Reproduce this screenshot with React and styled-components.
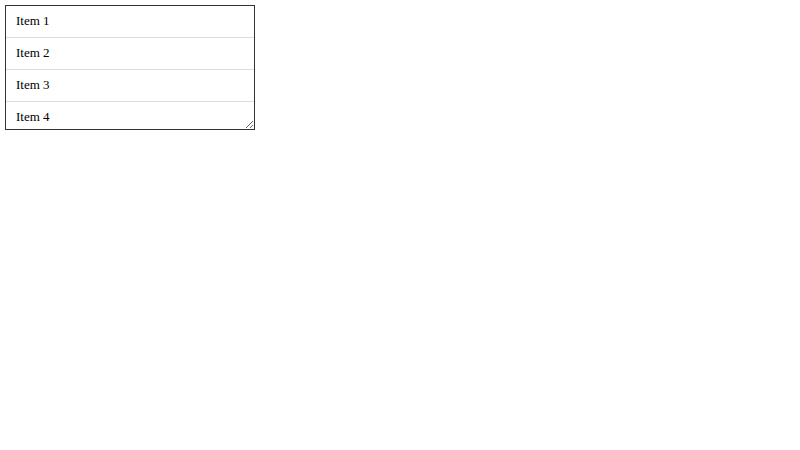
import React from "react";
import styled, { createGlobalStyle } from "styled-components";

const GlobalStyle = createGlobalStyle`
  body {
    margin: 0;
    background: #fff;
    font-family: "Liberation Serif", "Times New Roman", serif;
  }
`;

const items = ["Item 1", "Item 2", "Item 3", "Item 4"];

const App = () => {
  return (
    <>
      <GlobalStyle />
      <Page>
        <ListBox>
          {items.map((item) => (
            <ListItem key={item}>{item}</ListItem>
          ))}
        </ListBox>
      </Page>
    </>
  );
};

const Page = styled.div`
  padding: 5px;
`;

const ListBox = styled.div`
  box-sizing: border-box;
  width: 250px;
  height: 125px;
  border: 1px solid #333;
  overflow: hidden;
  resize: both;
`;

const ListItem = styled.div`
  padding: 7px 10px 9px;
  font-size: 13px;
  line-height: 15px;
  color: #000;
  border-bottom: 1px solid #ddd;
`;

export default App;
